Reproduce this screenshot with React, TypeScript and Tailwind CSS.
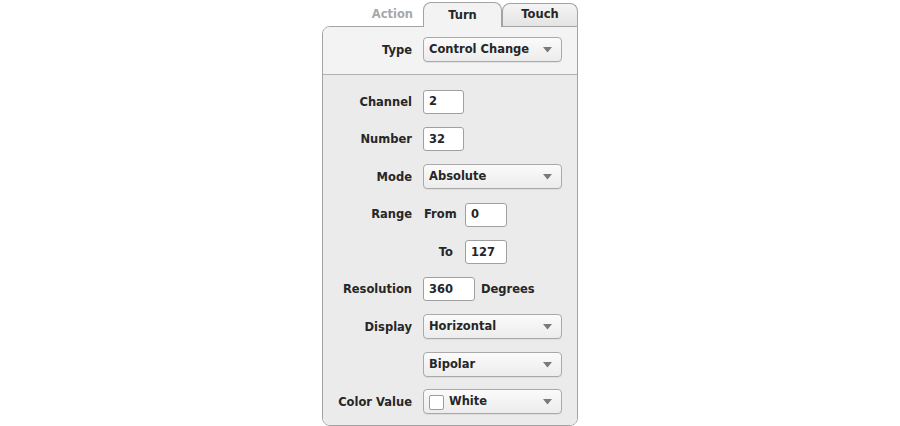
import React from "react";

const font = { fontFamily: '"DejaVu Sans", "Liberation Sans", sans-serif' };

function Arrow() {
  return (
    <svg width="9" height="6" viewBox="0 0 9 6" className="shrink-0">
      <path d="M0 0 L9 0 L4.5 5.5 Z" fill="#7a7a7a" />
    </svg>
  );
}

function Dropdown({ label, swatch }: { label: string; swatch?: boolean }) {
  return (
    <div className="flex h-[25px] w-[139px] items-center rounded-[4px] border border-[#a9a9a9] bg-gradient-to-b from-[#fbfbfb] to-[#ececec] pl-[5px] pr-[9px] pt-[1px] shadow-[0_1px_0_rgba(0,0,0,0.06)]">
      {swatch && (
        <div className="mr-[5px] h-[15px] w-[15px] rounded-[2px] border border-[#9c9c9c] bg-white" />
      )}
      <span className="flex-1 text-[11.5px] font-bold text-[#262626]">{label}</span>
      <Arrow />
    </div>
  );
}

function Input({ value, w }: { value: string; w: string }) {
  return (
    <div
      className={`flex h-[24px] items-center rounded-[3px] border-[1.5px] border-[#a0a0a0] bg-white pl-[5px] pt-[1px] text-[11.5px] font-bold text-[#262626] ${w}`}
    >
      {value}
    </div>
  );
}

function Label({ children }: { children: React.ReactNode }) {
  return (
    <div className="flex h-[25px] items-center justify-end pt-[2px] text-[11.5px] font-bold text-[#262626]">
      {children}
    </div>
  );
}

export default function App() {
  return (
    <div className="min-h-[426px] w-full bg-white" style={font}>
      <div className="mx-auto w-[256px] pt-[2px]">
        {/* Tabs */}
        <div className="flex h-[24px] items-end justify-end">
          <div className="mr-[10px] flex h-[24px] items-center pt-[2px] text-[11.5px] font-bold text-[#a8a8a8]">
            Action
          </div>
          <div className="relative z-10 -mb-px flex h-[25px] w-[79px] items-center justify-center rounded-t-[8px] border border-b-0 border-[#a3a3a3] bg-[#f3f3f3] pt-[1px] text-[11.5px] font-bold text-[#262626]">
            Turn
          </div>
          <div className="flex h-[23px] w-[76px] items-center justify-center rounded-t-[8px] border border-b-0 border-[#a3a3a3] bg-gradient-to-b from-[#f4f4f4] to-[#e4e4e4] text-[11.5px] font-bold text-[#262626]">
            Touch
          </div>
        </div>
        {/* Panel */}
        <div className="overflow-hidden rounded-b-[8px] rounded-tl-[8px] border border-[#a3a3a3]">
          <div className="grid grid-cols-[89px_1fr] gap-x-[11px] border-b border-[#b0b0b0] bg-[#f3f3f3] pb-[12px] pt-[10px]">
            <Label>Type</Label>
            <Dropdown label="Control Change" />
          </div>
          <div className="grid grid-cols-[89px_1fr] gap-x-[11px] gap-y-[12.5px] bg-[#ebebeb] pb-[11px] pt-[14px]">
            <Label>Channel</Label>
            <div className="flex items-center">
              <Input value="2" w="w-[41px]" />
            </div>
            <Label>Number</Label>
            <div className="flex items-center">
              <Input value="32" w="w-[41px]" />
            </div>
            <Label>Mode</Label>
            <Dropdown label="Absolute" />
            <Label>Range</Label>
            <div className="flex items-center pt-[1px]">
              <span className="w-[33px] pl-[1px] pt-[1px] text-[11.5px] font-bold text-[#262626]">From</span>
              <div className="ml-[9px]">
                <Input value="0" w="w-[42px]" />
              </div>
            </div>
            <div />
            <div className="flex items-center pt-[1px]">
              <span className="w-[33px] pr-[3px] pt-[1px] text-right text-[11.5px] font-bold text-[#262626]">To</span>
              <div className="ml-[9px]">
                <Input value="127" w="w-[42px]" />
              </div>
            </div>
            <Label>Resolution</Label>
            <div className="flex items-center">
              <Input value="360" w="w-[52px]" />
              <span className="ml-[6px] pt-[2px] text-[11.5px] font-bold text-[#262626]">Degrees</span>
            </div>
            <Label>Display</Label>
            <Dropdown label="Horizontal" />
            <div />
            <Dropdown label="Bipolar" />
            <Label>Color Value</Label>
            <Dropdown label="White" swatch />
          </div>
        </div>
      </div>
    </div>
  );
}
